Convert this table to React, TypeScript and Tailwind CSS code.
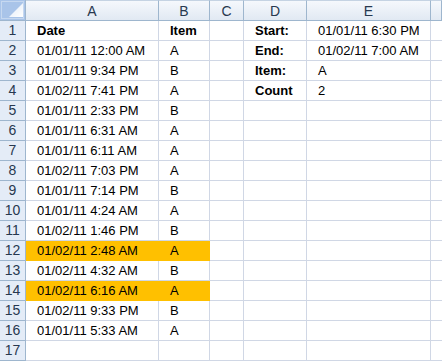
import clsx from "clsx";

const columns = ["A", "B", "C", "D", "E", ""];

// column widths (px) matching the sheet's header grid
const colClass = "grid grid-cols-[26px_133px_51px_34px_63px_124px_1fr]";

interface SheetRow {
  date?: string;
  item?: string;
  label?: string;
  value?: string;
  bold?: boolean;
  highlight?: boolean;
}

const rows: SheetRow[] = [
  { date: "Date", item: "Item", label: "Start:", value: "01/01/11 6:30 PM", bold: true },
  { date: "01/01/11 12:00 AM", item: "A", label: "End:", value: "01/02/11 7:00 AM" },
  { date: "01/01/11 9:34 PM", item: "B", label: "Item:", value: "A" },
  { date: "01/02/11 7:41 PM", item: "A", label: "Count", value: "2" },
  { date: "01/01/11 2:33 PM", item: "B" },
  { date: "01/01/11 6:31 AM", item: "A" },
  { date: "01/01/11 6:11 AM", item: "A" },
  { date: "01/02/11 7:03 PM", item: "A" },
  { date: "01/01/11 7:14 PM", item: "B" },
  { date: "01/01/11 4:24 AM", item: "A" },
  { date: "01/02/11 1:46 PM", item: "B" },
  { date: "01/02/11 2:48 AM", item: "A", highlight: true },
  { date: "01/02/11 4:32 AM", item: "B" },
  { date: "01/02/11 6:16 AM", item: "A", highlight: true },
  { date: "01/02/11 9:33 PM", item: "B" },
  { date: "01/01/11 5:33 AM", item: "A" },
  {},
];

function Cell({
  children,
  bold,
  fill,
}: {
  children?: React.ReactNode;
  bold?: boolean;
  fill?: boolean;
}) {
  return (
    <div
      className={clsx(
        "h-[20px] border-b border-r pl-[11px] leading-[19px] whitespace-nowrap overflow-hidden",
        fill ? "bg-[#ffc000] border-[#ffc000]" : "border-[#d0d7e5]",
        bold && "font-bold"
      )}
    >
      {children}
    </div>
  );
}

export default function App() {
  return (
    <div
      className="w-[442px] h-[361px] overflow-hidden bg-white text-[13px] text-black"
      style={{ fontFamily: '"Liberation Sans", Arial, sans-serif' }}
    >
      <div className={clsx(colClass, "h-[21px]")}>
        <div className="relative border-b border-r border-[#9eb6ce] bg-[#a9c4e9]">
          <div className="absolute inset-[1px] border border-[#c6d8f0]" />
          <svg className="absolute left-[9px] top-[3px]" width="14" height="14" viewBox="0 0 14 14">
            <defs>
              <linearGradient id="corner" x1="0" y1="0" x2="1" y2="1">
                <stop offset="0" stopColor="#dfe9f7" />
                <stop offset="1" stopColor="#ffffff" />
              </linearGradient>
            </defs>
            <polygon points="14,0 14,14 0,14" fill="url(#corner)" />
          </svg>
        </div>
        {columns.map((c, i) => (
          <div
            key={i}
            className="flex items-center justify-center border-b border-r border-t border-t-[#c5d3e3] border-[#9eb6ce] bg-gradient-to-b from-[#f5f8fc] to-[#e1e9f3] text-[14px] text-[#27384f] leading-none pt-[1px]"
          >
            {c}
          </div>
        ))}
      </div>

      {rows.map((r, i) => (
        <div key={i} className={colClass}>
          <div className="h-[20px] border-b border-r border-[#9eb6ce] bg-[#e4ecf7] text-center text-[14px] leading-[19px] text-[#27384f]">
            {i + 1}
          </div>
          <Cell bold={r.bold} fill={r.highlight}>
            {r.date}
          </Cell>
          <Cell bold={r.bold} fill={r.highlight}>
            {r.item}
          </Cell>
          <Cell />
          <Cell bold>{r.label}</Cell>
          <Cell>{r.value}</Cell>
          <Cell />
        </div>
      ))}
    </div>
  );
}
